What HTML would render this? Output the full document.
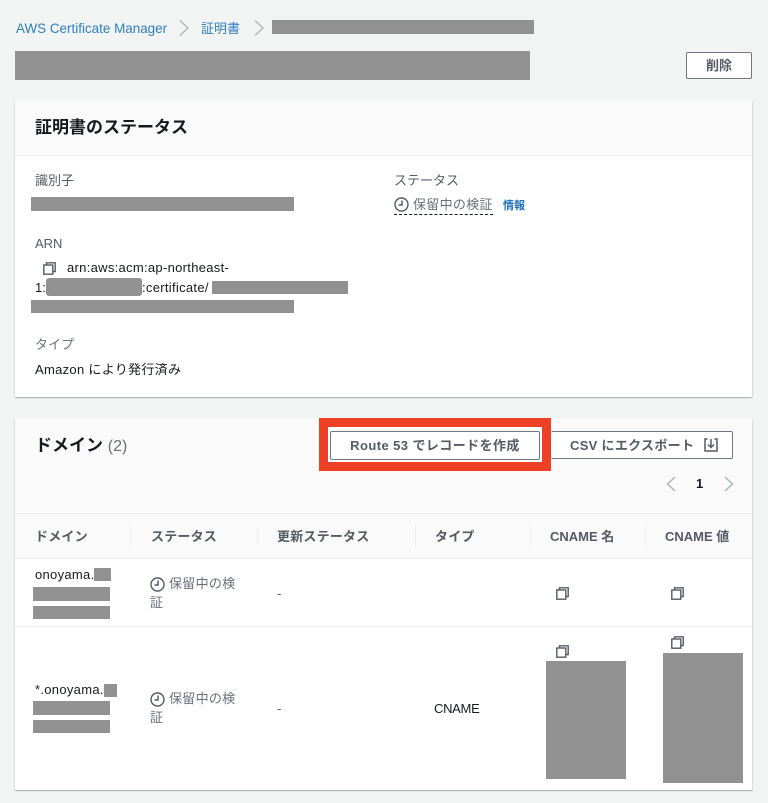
<!DOCTYPE html>
<html lang="ja">
<head>
<meta charset="utf-8">
<style>
html,body{margin:0;padding:0;background:#f2f3f3}
body{width:768px;height:803px;overflow:hidden;background:#f2f3f3;position:relative;font-family:"Liberation Sans","Noto Sans CJK JP",sans-serif;font-size:13px;color:#16191f}
#w{position:absolute;left:0;top:0;width:768px;height:803px;overflow:hidden;filter:blur(.35px)}
.a{position:absolute;white-space:nowrap;line-height:18px}
.t{letter-spacing:.3px}
.b{position:absolute;background:#919191}
.card{position:absolute;left:15px;width:737px;background:#fff;box-shadow:0 1px 1px 0 rgba(0,28,36,.25),1px 1px 1px 0 rgba(0,28,36,.06),-1px 1px 1px 0 rgba(0,28,36,.06)}
.l{color:#545b64}
.link{color:#2f7fc1}
.th{font-weight:700;color:#545b64;letter-spacing:.2px}
.sep{position:absolute;width:1px;height:22px;top:525px;background:#eaeded}
.btn{position:absolute;box-sizing:border-box;background:#fff;border:1px solid #70767e;border-radius:2px;font-weight:700;color:#545b64;text-align:center;white-space:nowrap}
svg{position:absolute;overflow:visible}
</style>
</head>
<body>
<div id="w">
<!-- Breadcrumb -->
<div class="a link" style="left:16px;top:20px;font-size:13.45px">AWS Certificate Manager</div>
<svg style="left:179px;top:20px" width="10" height="16" fill="none" stroke="#aab7b8" stroke-width="1.3"><path d="M1 0.5L9 8L1 15.5"/></svg>
<div class="a link" style="left:201px;top:20px">証明書</div>
<svg style="left:254px;top:20px" width="10" height="16" fill="none" stroke="#aab7b8" stroke-width="1.3"><path d="M1 0.5L9 8L1 15.5"/></svg>
<div class="b" style="left:272px;top:20px;width:262px;height:14px"></div>

<!-- Title -->
<div class="b" style="left:15px;top:51px;width:515px;height:29px"></div>
<div class="btn" style="left:686px;top:52px;width:66px;height:27px;line-height:25px">削除</div>

<!-- Card 1 -->
<div class="card" style="top:100px;height:297px"></div>
<div class="a" style="left:15px;top:100px;width:737px;height:56px;background:#fafafa;border-bottom:1px solid #eaeded;box-sizing:border-box"></div>
<div class="a" style="left:35px;top:116px;font-size:17px;line-height:24px;font-weight:700">証明書のステータス</div>

<div class="a l" style="left:35px;top:172px">識別子</div>
<div class="b" style="left:31px;top:197px;width:263px;height:14px"></div>

<div class="a l" style="left:394px;top:172px">ステータス</div>
<svg style="left:394px;top:197px" width="15" height="15" fill="none" stroke="#545b64" stroke-width="1.4"><circle cx="7.5" cy="7.5" r="6.5"/><path d="M8 3.5V8H4.5" stroke-width="1.5"/></svg>
<div class="a l t" style="left:413px;top:196px;color:#687078">保留中の検証</div>
<div class="a" style="left:394px;top:214px;width:99px;height:0;border-top:1px dashed #16191f"></div>
<div class="a link" style="left:503px;top:197px;font-size:11px;font-weight:700;color:#1a6fb5">情報</div>

<div class="a l" style="left:35px;top:235px">ARN</div>
<svg style="left:43px;top:262px" width="13" height="13" fill="none" stroke="#545b64" stroke-width="1.4"><path d="M3.5 3V0.8H12.2V9.5H9.8"/><rect x="0.8" y="3" width="9" height="9.2"/></svg>
<div class="a t" style="left:67px;top:259px">arn:aws:acm:ap-northeast-</div>
<div class="a" style="left:35px;top:279px">1:</div>
<div class="b" style="left:46px;top:278px;width:96px;height:18px;border-radius:3px"></div>
<div class="a t" style="left:142px;top:279px">:certificate/</div>
<div class="b" style="left:212px;top:281px;width:136px;height:13px"></div>
<div class="b" style="left:31px;top:300px;width:263px;height:13px"></div>

<div class="a l" style="left:35px;top:336px;color:#687078">タイプ</div>
<div class="a t" style="left:35px;top:361px">Amazon により発行済み</div>

<!-- Card 2 -->
<div class="card" style="top:418px;height:372px"></div>
<div class="a" style="left:15px;top:418px;width:737px;height:141px;background:#fafafa;border-bottom:1px solid #eaeded;box-sizing:border-box"></div>
<div class="a" style="left:15px;top:513px;width:737px;height:1px;background:#eaeded"></div>
<div class="a" style="left:35px;top:434px;font-size:17px;line-height:24px;font-weight:700">ドメイン <span style="font-weight:400;color:#687078;font-size:16px">(2)</span></div>

<div class="a" style="left:319px;top:418px;width:232px;height:53px;box-sizing:border-box;border:9px solid #ee4024;background:#fff"></div>
<div class="btn" style="left:330px;top:431px;width:210px;height:29px;line-height:28px;letter-spacing:.42px">Route 53 でレコードを作成</div>
<div class="btn" style="left:551px;top:431px;width:182px;height:28px;line-height:27px;border-left:0;text-align:left;padding-left:19px;letter-spacing:.3px">CSV にエクスポート</div>
<svg style="left:704px;top:438px" width="14" height="14" fill="none" stroke="#545b64" stroke-width="1.5"><path d="M3.5 1H1V13H13V1H10.5M7 1V9M4 6.5L7 9.5L10 6.5"/></svg>

<svg style="left:666px;top:476px" width="10" height="16" fill="none" stroke="#aab7b8" stroke-width="1.5"><path d="M9 1L1.5 8L9 15"/></svg>
<div class="a" style="left:696px;top:475px;font-weight:700">1</div>
<svg style="left:724px;top:476px" width="10" height="16" fill="none" stroke="#aab7b8" stroke-width="1.5"><path d="M1 1L8.5 8L1 15"/></svg>

<div class="a th" style="left:35px;top:528px">ドメイン</div>
<div class="sep" style="left:130px"></div>
<div class="a th" style="left:151px;top:528px">ステータス</div>
<div class="sep" style="left:257px"></div>
<div class="a th" style="left:277px;top:528px">更新ステータス</div>
<div class="sep" style="left:415px"></div>
<div class="a th" style="left:435px;top:528px">タイプ</div>
<div class="sep" style="left:530px"></div>
<div class="a th" style="left:550px;top:528px;letter-spacing:0">CNAME 名</div>
<div class="sep" style="left:645px"></div>
<div class="a th" style="left:665px;top:528px;letter-spacing:0">CNAME 値</div>

<!-- Row 1 -->
<div class="a t" style="left:35px;top:566px">onoyama.</div>
<div class="b" style="left:94px;top:568px;width:17px;height:13px"></div>
<div class="b" style="left:33px;top:587px;width:77px;height:14px"></div>
<div class="b" style="left:33px;top:606px;width:77px;height:13px"></div>
<svg style="left:150px;top:577px" width="15" height="15" fill="none" stroke="#545b64" stroke-width="1.4"><circle cx="7.5" cy="7.5" r="6.5"/><path d="M8 3.5V8H4.5" stroke-width="1.5"/></svg>
<div class="a t" style="left:169px;top:575px;color:#687078">保留中の検</div>
<div class="a" style="left:150px;top:594px;color:#687078">証</div>
<div class="a" style="left:277px;top:585px;color:#545b64">-</div>
<svg style="left:556px;top:587px" width="13" height="13" fill="none" stroke="#545b64" stroke-width="1.4"><path d="M3.5 3V0.8H12.2V9.5H9.8"/><rect x="0.8" y="3" width="9" height="9.2"/></svg>
<svg style="left:671px;top:587px" width="13" height="13" fill="none" stroke="#545b64" stroke-width="1.4"><path d="M3.5 3V0.8H12.2V9.5H9.8"/><rect x="0.8" y="3" width="9" height="9.2"/></svg>
<div class="a" style="left:15px;top:626px;width:737px;height:1px;background:#eaeded"></div>

<!-- Row 2 -->
<div class="a t" style="left:35px;top:681px">*.onoyama.</div>
<div class="b" style="left:104px;top:684px;width:13px;height:13px"></div>
<div class="b" style="left:33px;top:701px;width:77px;height:14px"></div>
<div class="b" style="left:33px;top:720px;width:77px;height:13px"></div>
<svg style="left:150px;top:692px" width="15" height="15" fill="none" stroke="#545b64" stroke-width="1.4"><circle cx="7.5" cy="7.5" r="6.5"/><path d="M8 3.5V8H4.5" stroke-width="1.5"/></svg>
<div class="a t" style="left:169px;top:690px;color:#687078">保留中の検</div>
<div class="a" style="left:150px;top:709px;color:#687078">証</div>
<div class="a" style="left:277px;top:700px;color:#545b64">-</div>
<div class="a" style="left:434px;top:700px;letter-spacing:-.3px">CNAME</div>
<svg style="left:556px;top:645px" width="13" height="13" fill="none" stroke="#545b64" stroke-width="1.4"><path d="M3.5 3V0.8H12.2V9.5H9.8"/><rect x="0.8" y="3" width="9" height="9.2"/></svg>
<svg style="left:671px;top:636px" width="13" height="13" fill="none" stroke="#545b64" stroke-width="1.4"><path d="M3.5 3V0.8H12.2V9.5H9.8"/><rect x="0.8" y="3" width="9" height="9.2"/></svg>
<div class="b" style="left:546px;top:661px;width:80px;height:118px"></div>
<div class="b" style="left:663px;top:653px;width:80px;height:130px"></div>
</div>
</body>
</html>
